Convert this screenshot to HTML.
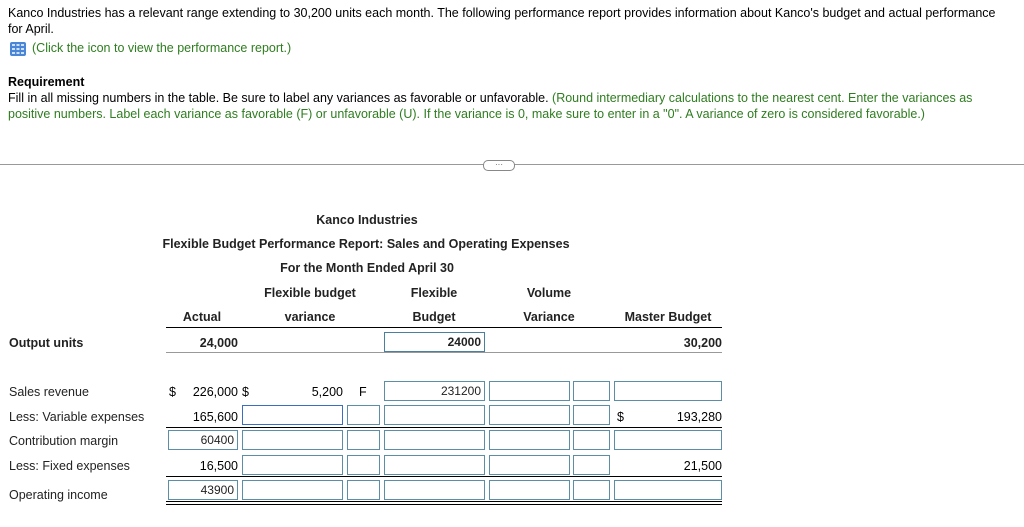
<!DOCTYPE html><html><head><style>
body{margin:0;width:1024px;height:527px;background:#fff;font-family:"Liberation Sans",Arial,sans-serif;font-size:12.5px;color:#000;position:relative;overflow:hidden}
.a{position:absolute;white-space:nowrap}
.g{color:#2e7d1f}
.b{font-weight:bold}
.bx{position:absolute;border:1px solid #5b8fa8;box-sizing:border-box;height:20px;font-size:12px;text-align:right;padding-right:3px;line-height:18px;color:#222}
.r{position:absolute;text-align:right;white-space:nowrap}
.c{position:absolute;text-align:center;white-space:nowrap;font-weight:bold;color:#222}
.ln{position:absolute;height:1px;background:#000}
</style></head><body>
<div class="a" style="left:8px;top:6px">Kanco Industries has a relevant range extending to 30,200 units each month. The following performance report provides information about Kanco's budget and actual performance</div>
<div class="a" style="left:8px;top:22px">for April.</div>
<div class="a" style="left:10px;top:42px;width:16px;height:14px;background:#4a86d8;border-radius:2px"><svg width="16" height="14" style="display:block"><g fill="#cfe0fb"><rect x="2" y="2" width="3" height="2"/><rect x="6.5" y="2" width="3" height="2"/><rect x="11" y="2" width="3" height="2"/><rect x="2" y="6" width="3" height="2"/><rect x="6.5" y="6" width="3" height="2"/><rect x="11" y="6" width="3" height="2"/><rect x="2" y="10" width="3" height="2"/><rect x="6.5" y="10" width="3" height="2"/><rect x="11" y="10" width="3" height="2"/></g></svg></div>
<div class="a g" style="left:32px;top:41px">(Click the icon to view the performance report.)</div>
<div class="a b" style="left:8px;top:75px">Requirement</div>
<div class="a" style="left:8px;top:91px">Fill in all missing numbers in the table. Be sure to label any variances as favorable or unfavorable. <span class="g">(Round intermediary calculations to the nearest cent. Enter the variances as</span></div>
<div class="a g" style="left:8px;top:107px">positive numbers. Label each variance as favorable (F) or unfavorable (U). If the variance is 0, make sure to enter in a "0". A variance of zero is considered favorable.)</div>
<div class="ln" style="left:0;top:164px;width:1024px;background:#999"></div>
<div class="a" style="left:483px;top:160px;width:30px;height:9px;border:1px solid #888;border-radius:5px;background:#fff;font-size:8px;line-height:7px;text-align:center;color:#555">···</div>

<div class="c" style="left:267px;width:200px;top:213px">Kanco Industries</div>
<div class="c" style="left:140px;width:452px;top:237px">Flexible Budget Performance Report: Sales and Operating Expenses</div>
<div class="c" style="left:267px;width:200px;top:261px">For the Month Ended April 30</div>
<div class="c" style="left:240px;width:140px;top:286px">Flexible budget</div>
<div class="c" style="left:384px;width:100px;top:286px">Flexible</div>
<div class="c" style="left:499px;width:100px;top:286px">Volume</div>
<div class="c" style="left:166px;width:72px;top:310px">Actual</div>
<div class="c" style="left:240px;width:140px;top:310px">variance</div>
<div class="c" style="left:384px;width:100px;top:310px">Budget</div>
<div class="c" style="left:499px;width:100px;top:310px">Variance</div>
<div class="c" style="left:614px;width:108px;top:310px">Master Budget</div>
<div class="ln" style="left:166px;top:327px;width:556px"></div>

<div class="a b" style="left:9px;top:336px;color:#222">Output units</div>
<div class="r b" style="left:166px;width:72px;top:336px;color:#222">24,000</div>
<div class="bx" style="left:384px;top:332px;width:101px;font-weight:bold;border-color:#4a7fa0">24000</div>
<div class="r b" style="left:614px;width:108px;top:336px;color:#222">30,200</div>
<div class="ln" style="left:166px;top:352px;width:556px;background:#999"></div>

<div class="a" style="left:9px;top:385px;color:#222">Sales revenue</div>
<div class="a" style="left:9px;top:410px;color:#222">Less: Variable expenses</div>
<div class="a" style="left:9px;top:434px;color:#222">Contribution margin</div>
<div class="a" style="left:9px;top:459px;color:#222">Less: Fixed expenses</div>
<div class="a" style="left:9px;top:488px;color:#222">Operating income</div>

<div class="a" style="left:169px;top:385px">$</div>
<div class="r" style="left:166px;width:72px;top:385px">226,000</div>
<div class="a" style="left:242px;top:385px">$</div>
<div class="r" style="left:242px;width:101px;top:385px">5,200</div>
<div class="a" style="left:359px;top:385px">F</div>
<div class="bx" style="left:384px;top:381px;width:101px">231200</div>
<div class="bx" style="left:489px;top:381px;width:81px"></div>
<div class="bx" style="left:573px;top:381px;width:37px"></div>
<div class="bx" style="left:614px;top:381px;width:108px"></div>

<div class="r" style="left:166px;width:72px;top:410px">165,600</div>
<div class="bx" style="left:242px;top:405px;width:101px;border-color:#3a6fc0"></div>
<div class="bx" style="left:347px;top:405px;width:33px"></div>
<div class="bx" style="left:384px;top:405px;width:101px"></div>
<div class="bx" style="left:489px;top:405px;width:81px"></div>
<div class="bx" style="left:573px;top:405px;width:37px"></div>
<div class="a" style="left:617px;top:410px">$</div>
<div class="r" style="left:614px;width:108px;top:410px">193,280</div>
<div class="ln" style="left:166px;top:427px;width:556px"></div>

<div class="bx" style="left:168px;top:430px;width:70px">60400</div>
<div class="bx" style="left:242px;top:430px;width:101px"></div>
<div class="bx" style="left:347px;top:430px;width:33px"></div>
<div class="bx" style="left:384px;top:430px;width:101px"></div>
<div class="bx" style="left:489px;top:430px;width:81px"></div>
<div class="bx" style="left:573px;top:430px;width:37px"></div>
<div class="bx" style="left:614px;top:430px;width:108px"></div>

<div class="r" style="left:166px;width:72px;top:459px">16,500</div>
<div class="bx" style="left:242px;top:455px;width:101px"></div>
<div class="bx" style="left:347px;top:455px;width:33px"></div>
<div class="bx" style="left:384px;top:455px;width:101px"></div>
<div class="bx" style="left:489px;top:455px;width:81px"></div>
<div class="bx" style="left:573px;top:455px;width:37px"></div>
<div class="r" style="left:614px;width:108px;top:459px">21,500</div>
<div class="ln" style="left:166px;top:476px;width:556px"></div>

<div class="bx" style="left:168px;top:480px;width:70px">43900</div>
<div class="bx" style="left:242px;top:480px;width:101px"></div>
<div class="bx" style="left:347px;top:480px;width:33px"></div>
<div class="bx" style="left:384px;top:480px;width:101px"></div>
<div class="bx" style="left:489px;top:480px;width:81px"></div>
<div class="bx" style="left:573px;top:480px;width:37px"></div>
<div class="bx" style="left:614px;top:480px;width:108px"></div>
<div class="ln" style="left:166px;top:501px;width:556px"></div>
<div class="ln" style="left:166px;top:504px;width:556px"></div>
</body></html>
